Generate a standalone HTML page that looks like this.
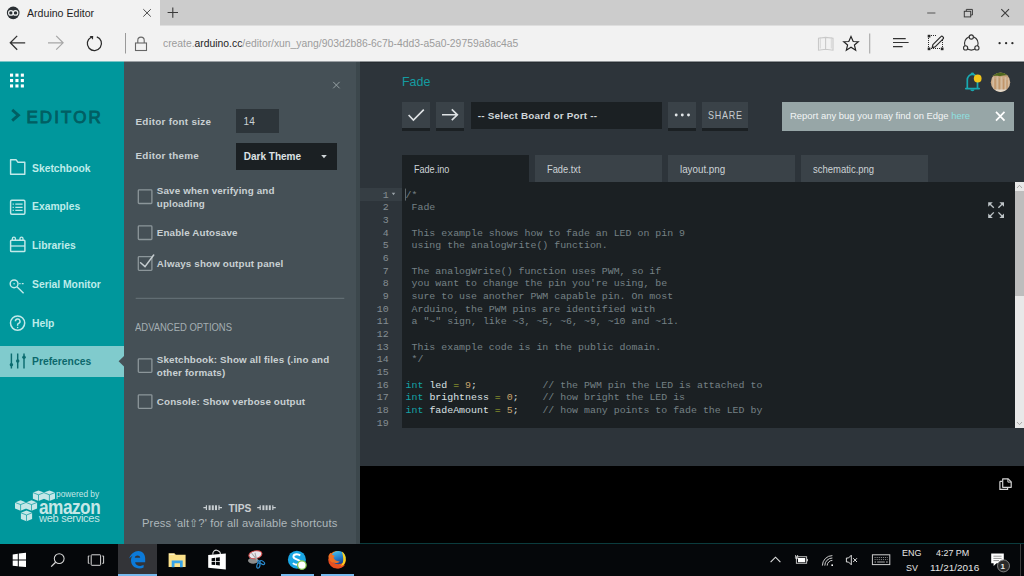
<!DOCTYPE html>
<html><head><meta charset="utf-8">
<style>
*{margin:0;padding:0;box-sizing:border-box}
html,body{width:1024px;height:576px;overflow:hidden;background:#f2f2f2;font-family:"Liberation Sans",sans-serif}
.a{position:absolute}
.t{position:absolute;white-space:nowrap;line-height:1}
svg{position:absolute;overflow:visible}
</style></head><body>
<!-- ===== Browser chrome ===== -->
<div class="a" style="left:0;top:0;width:1024px;height:25px;background:#cccccc"></div>
<div class="a" style="left:0;top:0;width:160px;height:26px;background:#f2f2f2"></div>
<div class="a" style="left:0;top:25px;width:1024px;height:36px;background:#f2f2f2"></div>
<div class="a" style="left:160px;top:25px;width:864px;height:1px;background:#dedede"></div>
<svg style="left:0;top:0" width="1024" height="61">
 <circle cx="13.2" cy="12.9" r="6.3" fill="#2b3034"/>
 <circle cx="10.9" cy="12.9" r="2.3" fill="none" stroke="#eef0f0" stroke-width="1.15"/><circle cx="15.5" cy="12.9" r="2.3" fill="none" stroke="#eef0f0" stroke-width="1.15"/>
 <path d="M143.3 9.2L150.8 16.6M150.8 9.2L143.3 16.6" stroke="#4a4a4a" stroke-width="1"/>
 <path d="M172.8 7.4V17.8M167.6 12.5H178" stroke="#3a3a3a" stroke-width="1.1"/>
 <path d="M927.2 13H935.4" stroke="#555" stroke-width="1"/>
 <rect x="964.3" y="11.3" width="6.4" height="5.6" fill="none" stroke="#3c3c3c" stroke-width="1"/>
 <path d="M966.3 11.3V9.4H972.4V15H970.7" fill="none" stroke="#3c3c3c" stroke-width="1"/>
 <path d="M1001.3 9.2L1009 16.9M1009 9.2L1001.3 16.9" stroke="#3c3c3c" stroke-width="1.1"/>
 <!-- back -->
 <path d="M10.4 42.8H25.2M17.2 35.9L10.3 42.8L17.2 49.7" fill="none" stroke="#333" stroke-width="1.3"/>
 <!-- forward -->
 <path d="M48 42.8H63M56.2 35.9L63.1 42.8L56.2 49.7" fill="none" stroke="#a6a6a6" stroke-width="1.2"/>
 <!-- refresh -->
 <path d="M96.8 36.8A7.1 7.1 0 1 1 91.1 37.2" fill="none" stroke="#2b2b2b" stroke-width="1.25"/>
 <path d="M93.2 35.9L89.6 36.1L93 39.7Z" fill="#2b2b2b"/>
 <path d="M125.5 33V53.5" stroke="#9a9a9a" stroke-width="1"/>
 <!-- lock -->
 <rect x="135.5" y="43" width="11" height="7.5" fill="none" stroke="#666" stroke-width="1.1"/>
 <path d="M137.8 43V40.3a3.2 3.2 0 0 1 6.4 0V43" fill="none" stroke="#666" stroke-width="1.1"/>
 <!-- book -->
 <path d="M818.5 38.2L825.6 37.4L833 38.2V50.2L825.6 49.3L818.5 50.2Z M825.6 37.4V49.3" fill="none" stroke="#c9c9c9" stroke-width="1.1"/>
 <path d="M820.3 37V48.5M831.3 37V48.5" fill="none" stroke="#d3d3d3" stroke-width="0.9"/>
 <!-- star -->
 <path d="M851 36.5L853.2 41.5L858.3 41.7L854.4 45L855.7 50.3L851 47.3L846.3 50.3L847.6 45L843.7 41.7L848.8 41.5Z" fill="none" stroke="#222" stroke-width="1.15" stroke-linejoin="miter"/>
 <path d="M869.7 33.4V53.4" stroke="#a8a8a8" stroke-width="1.1"/>
 <!-- hub -->
 <path d="M893 38.6H905.7M893 42.5H908.6M893 46.6H902.6" stroke="#333" stroke-width="1.1"/>
 <!-- web note -->
 <path d="M928.5 38V47M931 48.5H941M931 35.5H937M942.5 40V47" fill="none" stroke="#2a2a2a" stroke-width="1" stroke-dasharray="1 1"/>
 <rect x="927.7" y="34.8" width="2.7" height="2.7" fill="#2a2a2a"/><rect x="927.7" y="47.5" width="2.7" height="2.7" fill="#2a2a2a"/><rect x="940.8" y="47.5" width="2.7" height="2.7" fill="#2a2a2a"/>
 <path d="M932.9 44.6L940.9 36.6a1.2 1.2 0 0 1 1.8 0l0.4 0.4a1.2 1.2 0 0 1 0 1.8L935.1 46.8L932.2 47.6Z" fill="none" stroke="#2a2a2a" stroke-width="1.2" stroke-linejoin="round"/>
 <!-- share -->
 <circle cx="971.3" cy="43.3" r="6.8" fill="none" stroke="#333" stroke-width="1.1"/>
 <circle cx="971.3" cy="37" r="2.1" fill="#f2f2f2" stroke="#333" stroke-width="1.1"/>
 <circle cx="965.6" cy="47.9" r="2.1" fill="#f2f2f2" stroke="#333" stroke-width="1.1"/>
 <circle cx="976.9" cy="47.9" r="2.1" fill="#f2f2f2" stroke="#333" stroke-width="1.1"/>
 <!-- more -->
 <circle cx="999.6" cy="43.2" r="1.15" fill="#2a2a2a"/><circle cx="1006.1" cy="43.2" r="1.15" fill="#2a2a2a"/><circle cx="1012.4" cy="43.2" r="1.15" fill="#2a2a2a"/>
</svg>
<div class="t" style="left:27px;top:8.3px;font-size:11.4px;color:#1f1f1f;transform:scaleX(0.93);transform-origin:0 0">Arduino Editor</div>
<div class="t" style="left:163.3px;top:38.3px;font-size:11px;color:#9c9c9c;transform:scaleX(0.94);transform-origin:0 0">create.<span style="color:#1e1e1e">arduino.cc</span>/editor/xun_yang/903d2b86-6c7b-4dd3-a5a0-29759a8ac4a5</div>

<!-- ===== Sidebar ===== -->
<div class="a" style="left:0;top:61px;width:124px;height:483px;background:#00979c"></div>
<div class="a" style="left:0;top:346px;width:124px;height:31px;background:#80cbcd"></div>
<svg style="left:0;top:0" width="124" height="544">
 <rect x="10.0" y="73.6" width="3.1" height="3.1" fill="#fff"/>
 <rect x="10.0" y="79.0" width="3.1" height="3.1" fill="#fff"/>
 <rect x="10.0" y="84.4" width="3.1" height="3.1" fill="#fff"/>
 <rect x="15.4" y="73.6" width="3.1" height="3.1" fill="#fff"/>
 <rect x="15.4" y="79.0" width="3.1" height="3.1" fill="#fff"/>
 <rect x="15.4" y="84.4" width="3.1" height="3.1" fill="#fff"/>
 <rect x="20.8" y="73.6" width="3.1" height="3.1" fill="#fff"/>
 <rect x="20.8" y="79.0" width="3.1" height="3.1" fill="#fff"/>
 <rect x="20.8" y="84.4" width="3.1" height="3.1" fill="#fff"/>
 <path d="M12.2 109.8L18.4 115.2L12.2 120.6" fill="none" stroke="#005f63" stroke-width="2.9"/>
 <path d="M10.6 159.8H16.2L17.8 162.2H24.8V174.2H10.6Z" fill="none" stroke="#c3e9e9" stroke-width="1.45" stroke-linejoin="round"/>
 <rect x="10.6" y="200.3" width="14.3" height="14" rx="1.2" fill="none" stroke="#c3e9e9" stroke-width="1.45"/>
 <path d="M12.6 204.2H13.8M12.6 207.3H13.8M12.6 210.4H13.8M15.3 204.2H22.6M15.3 207.3H22.6M15.3 210.4H22.6" stroke="#c3e9e9" stroke-width="1.3"/>
 <rect x="10.6" y="240.2" width="14.3" height="11.3" rx="0.8" fill="none" stroke="#c3e9e9" stroke-width="1.45"/>
 <path d="M10.6 246H24.9" stroke="#c3e9e9" stroke-width="1.3"/>
 <path d="M12.4 240.2V238.6a1.5 1.5 0 0 1 3 0V240.2M20 240.2V238.6a1.5 1.5 0 0 1 3 0V240.2" fill="none" stroke="#c3e9e9" stroke-width="1.3"/>
 <circle cx="14.1" cy="283.8" r="3.9" fill="none" stroke="#c3e9e9" stroke-width="1.45"/>
 <circle cx="14.1" cy="283.8" r="0.8" fill="#c3e9e9"/>
 <path d="M17 286.8L23.6 293.2" stroke="#c3e9e9" stroke-width="1.45"/>
 <path d="M19.2 283.6H20.6M21.8 283.6H23.6" stroke="#c3e9e9" stroke-width="1.3"/>
 <circle cx="17.6" cy="323.1" r="7.1" fill="none" stroke="#c3e9e9" stroke-width="1.5"/>
 <path d="M15.4 321.3a2.3 2.3 0 1 1 3.2 2.1c-0.7 0.3 -1 0.8 -1 1.5V325.8" fill="none" stroke="#c3e9e9" stroke-width="1.45"/>
 <circle cx="17.6" cy="327.6" r="0.75" fill="#c3e9e9"/>
 <path d="M11.4 353.6V368.6M17.7 353.6V368.6M24 353.6V368.6" stroke="#0b6c70" stroke-width="1.45"/>
 <circle cx="11.4" cy="364.8" r="1.75" fill="#0b6c70"/><circle cx="17.7" cy="361.1" r="1.75" fill="#0b6c70"/><circle cx="24" cy="357.3" r="1.75" fill="#0b6c70"/>
 <path d="M124 356L118.6 361.3L124 366.6Z" fill="#465157"/>
 <path d="M32.9 492.59999999999997L38.5 490.4L44.099999999999994 492.59999999999997V498.79999999999995L38.5 501.0L32.9 498.79999999999995Z" fill="#c5e7e7"/>
 <path d="M38.5 494.79999999999995V501.0M32.9 492.59999999999997L38.5 494.79999999999995L44.099999999999994 492.59999999999997" fill="none" stroke="#00979c" stroke-width="0.7"/>
 <path d="M43.8 492.59999999999997L49.4 490.4L55.0 492.59999999999997V498.79999999999995L49.4 501.0L43.8 498.79999999999995Z" fill="#c5e7e7"/>
 <path d="M49.4 494.79999999999995V501.0M43.8 492.59999999999997L49.4 494.79999999999995L55.0 492.59999999999997" fill="none" stroke="#00979c" stroke-width="0.7"/>
 <path d="M15 502.4L20.6 500.2L26.2 502.4V508.59999999999997L20.6 510.8L15 508.59999999999997Z" fill="#c5e7e7"/>
 <path d="M20.6 504.59999999999997V510.8M15 502.4L20.6 504.59999999999997L26.2 502.4" fill="none" stroke="#00979c" stroke-width="0.7"/>
 <path d="M25.9 502.4L31.5 500.2L37.099999999999994 502.4V508.59999999999997L31.5 510.8L25.9 508.59999999999997Z" fill="#c5e7e7"/>
 <path d="M31.5 504.59999999999997V510.8M25.9 502.4L31.5 504.59999999999997L37.099999999999994 502.4" fill="none" stroke="#00979c" stroke-width="0.7"/>
 <path d="M20.9 512.8000000000001L26.5 510.6L32.099999999999994 512.8000000000001V519.0L26.5 521.2L20.9 519.0Z" fill="#c5e7e7"/>
 <path d="M26.5 515.0V521.2M20.9 512.8000000000001L26.5 515.0L32.099999999999994 512.8000000000001" fill="none" stroke="#00979c" stroke-width="0.7"/>
</svg>
<div class="t" style="left:26.4px;top:108.7px;font-size:17px;color:#005f63;letter-spacing:2.1px;-webkit-text-stroke:0.9px #005f63;">EDITOR</div>
<div class="t" style="left:31.8px;top:163.19px;font-size:10.6px;color:#bdecea;font-weight:bold;transform:scaleX(0.975);transform-origin:0 0;">Sketchbook</div>
<div class="t" style="left:31.8px;top:200.79px;font-size:10.6px;color:#bdecea;font-weight:bold;transform:scaleX(0.975);transform-origin:0 0;">Examples</div>
<div class="t" style="left:31.8px;top:239.99px;font-size:10.6px;color:#bdecea;font-weight:bold;transform:scaleX(0.975);transform-origin:0 0;">Libraries</div>
<div class="t" style="left:31.8px;top:278.79px;font-size:10.6px;color:#bdecea;font-weight:bold;transform:scaleX(0.975);transform-origin:0 0;">Serial Monitor</div>
<div class="t" style="left:31.8px;top:317.69px;font-size:10.6px;color:#bdecea;font-weight:bold;transform:scaleX(0.975);transform-origin:0 0;">Help</div>
<div class="t" style="left:31.8px;top:355.59px;font-size:10.6px;color:#0c686c;font-weight:bold;transform:scaleX(0.975);transform-origin:0 0;">Preferences</div>
<div class="t" style="left:56.3px;top:490.8px;font-size:8.2px;color:#c5e7e7;transform:scaleX(1.02);transform-origin:0 0;">powered by</div>
<div class="t" style="left:38.6px;top:495.5px;font-size:21px;color:#c5e7e7;font-weight:bold;letter-spacing:-0.6px;transform:scaleX(0.82);transform-origin:0 0;">amazon</div>
<div class="t" style="left:39.4px;top:512.8px;font-size:11.3px;color:#c5e7e7;letter-spacing:-0.3px;transform:scaleX(0.98);transform-origin:0 0;">web services</div>
<!-- ===== Prefs panel ===== -->
<div class="a" style="left:124px;top:61px;width:232px;height:483px;background:#455056"></div>
<div class="a" style="left:356px;top:61px;width:4px;height:483px;background:#3c474c"></div>
<div class="a" style="left:236px;top:109px;width:43px;height:24px;background:#2d353a"></div>
<div class="a" style="left:236px;top:143px;width:100.5px;height:27px;background:#1b2023"></div>
<svg style="left:0;top:0" width="360" height="544">
 <path d="M333.2 81.9L339.6 88.3M339.6 81.9L333.2 88.3" stroke="#9aa4a8" stroke-width="0.95"/>
 <path d="M321.2 155L326.8 155L324 158.2Z" fill="#d0d5d8"/>
 <rect x="138.3" y="189.9" width="13.6" height="13.6" rx="0.8" fill="none" stroke="#8c969a" stroke-width="1.3"/>
 <rect x="138.3" y="225.9" width="13.6" height="13.6" rx="0.8" fill="none" stroke="#8c969a" stroke-width="1.3"/>
 <rect x="138.3" y="256.7" width="13.6" height="13.6" rx="0.8" fill="none" stroke="#8c969a" stroke-width="1.3"/>
 <rect x="138.3" y="358.8" width="13.6" height="13.6" rx="0.8" fill="none" stroke="#8c969a" stroke-width="1.3"/>
 <rect x="138.3" y="394.8" width="13.6" height="13.6" rx="0.8" fill="none" stroke="#8c969a" stroke-width="1.3"/>
 <path d="M140.6 262.7L145 266.6L153.7 255" fill="none" stroke="#c6cdd0" stroke-width="1.5" stroke-linecap="round"/>
 <path d="M135.7 298.3H344.3" stroke="#68757b" stroke-width="1"/>
 <path d="M203.4 507.7H206.4M219.0 507.7H222.0" stroke="#c8ced1" stroke-width="1.2"/>
 <path d="M206.4 505.3V510.1M219.0 505.3V510.1" stroke="#c8ced1" stroke-width="1.2"/>
 <rect x="208.6" y="505.3" width="2" height="4.8" fill="#c8ced1"/><rect x="211.8" y="505.3" width="2" height="4.8" fill="#c8ced1"/><rect x="215.0" y="505.3" width="2" height="4.8" fill="#c8ced1"/>
 <path d="M257.2 507.7H260.2M272.8 507.7H275.8" stroke="#c8ced1" stroke-width="1.2"/>
 <path d="M260.2 505.3V510.1M272.8 505.3V510.1" stroke="#c8ced1" stroke-width="1.2"/>
 <rect x="262.4" y="505.3" width="2" height="4.8" fill="#c8ced1"/><rect x="265.59999999999997" y="505.3" width="2" height="4.8" fill="#c8ced1"/><rect x="268.8" y="505.3" width="2" height="4.8" fill="#c8ced1"/>
</svg>
<div class="t" style="left:135.5px;top:116.88px;font-size:9.9px;color:#c9d0d3;font-weight:bold;letter-spacing:0.27px;">Editor font size</div>
<div class="t" style="left:135.5px;top:150.79px;font-size:9.9px;color:#c9d0d3;font-weight:bold;letter-spacing:0.27px;">Editor theme</div>
<div class="t" style="left:243.6px;top:117.3px;font-size:10px;color:#c9d0d3;">14</div>
<div class="t" style="left:243.8px;top:151.5px;font-size:10px;color:#dde2e4;font-weight:bold;letter-spacing:0px;">Dark Theme</div>
<div class="t" style="left:156.8px;top:185.67px;font-size:9.8px;color:#c9d0d3;font-weight:bold;letter-spacing:0.15px;">Save when verifying and</div>
<div class="t" style="left:156.8px;top:198.97px;font-size:9.8px;color:#c9d0d3;font-weight:bold;letter-spacing:0.15px;">uploading</div>
<div class="t" style="left:156.8px;top:227.77px;font-size:9.8px;color:#c9d0d3;font-weight:bold;letter-spacing:0.15px;">Enable Autosave</div>
<div class="t" style="left:156.8px;top:258.77px;font-size:9.8px;color:#c9d0d3;font-weight:bold;letter-spacing:0.15px;">Always show output panel</div>
<div class="t" style="left:135.2px;top:321.7px;font-size:10.9px;color:#a4aeb2;transform:scaleX(0.868);transform-origin:0 0;">ADVANCED OPTIONS</div>
<div class="t" style="left:156.8px;top:354.57px;font-size:9.8px;color:#c9d0d3;font-weight:bold;letter-spacing:0.15px;">Sketchbook: Show all files (.ino and</div>
<div class="t" style="left:156.8px;top:367.87px;font-size:9.8px;color:#c9d0d3;font-weight:bold;letter-spacing:0.15px;">other formats)</div>
<div class="t" style="left:156.8px;top:397.17px;font-size:9.8px;color:#c9d0d3;font-weight:bold;letter-spacing:0.15px;">Console: Show verbose output</div>
<div class="t" style="left:228.6px;top:503.8px;font-size:10.2px;color:#c8ced1;font-weight:bold;letter-spacing:0px;">TIPS</div>
<div class="t" style="left:142px;top:518.2px;font-size:11.2px;color:#aeb7bb;letter-spacing:0.15px;">Press 'alt⇧?' for all available shortcuts</div>
<!-- ===== Editor ===== -->
<div class="a" style="left:360px;top:61px;width:664px;height:405px;background:#2d343a"></div>
<div class="a" style="left:360px;top:466px;width:664px;height:78px;background:#000"></div>
<div class="a" style="left:360px;top:543px;width:664px;height:1px;background:#0b3b3d"></div>
<div class="a" style="left:402px;top:102px;width:28px;height:26px;background:#3a4248"></div>
<div class="a" style="left:402px;top:128px;width:28px;height:3px;background:#1b2023"></div>
<div class="a" style="left:436px;top:102px;width:28px;height:26px;background:#3a4248"></div>
<div class="a" style="left:436px;top:128px;width:28px;height:3px;background:#1b2023"></div>
<div class="a" style="left:668px;top:102px;width:28px;height:26px;background:#3a4248"></div>
<div class="a" style="left:668px;top:128px;width:28px;height:3px;background:#1b2023"></div>
<div class="a" style="left:702px;top:102px;width:46px;height:26px;background:#3a4248"></div>
<div class="a" style="left:702px;top:128px;width:46px;height:3px;background:#1b2023"></div>
<div class="a" style="left:470.5px;top:102px;width:191.5px;height:27.3px;background:#1b2023"></div>
<div class="a" style="left:782px;top:102px;width:232px;height:28.5px;background:#97a6a7"></div>
<div class="a" style="left:402px;top:155px;width:127px;height:28px;background:#1b2023"></div>
<div class="a" style="left:535px;top:155px;width:127px;height:26.5px;background:#3a4248"></div>
<div class="a" style="left:668px;top:155px;width:127px;height:26.5px;background:#3a4248"></div>
<div class="a" style="left:801px;top:155px;width:127px;height:26.5px;background:#3a4248"></div>
<div class="a" style="left:402px;top:182px;width:613px;height:246px;background:#1b2023"></div>
<div class="a" style="left:360px;top:188px;width:42px;height:13px;background:#363e44"></div>
<div class="a" style="left:1015px;top:182px;width:9px;height:246px;background:#e8e8e8"></div>
<div class="a" style="left:1015px;top:191.3px;width:9px;height:105.2px;background:#bdbdbd"></div>
<svg style="left:0;top:0" width="1024" height="544">
 <path d="M408.6 115L413.4 120L423.8 109.6" fill="none" stroke="#dfe3e5" stroke-width="1.6"/>
 <path d="M442 114.8H457.5M451.8 109.4L457.4 114.8L451.8 120.2" fill="none" stroke="#dfe3e5" stroke-width="1.6"/>
 <circle cx="676.2" cy="115" r="1.45" fill="#e3e7e9"/>
 <circle cx="682.3" cy="115" r="1.45" fill="#e3e7e9"/>
 <circle cx="688.5" cy="115" r="1.45" fill="#e3e7e9"/>
 <path d="M996 111.8L1004.5 120.6M1004.5 111.8L996 120.6" stroke="#fff" stroke-width="1.7"/>
 <path d="M965.8 88.6H979.2M967.3 88.2V80a5.1 5.6 0 0 1 10.2 0V88.2" fill="none" stroke="#19a9b1" stroke-width="1.7" stroke-linejoin="round" stroke-linecap="round"/>
 <path d="M970.3 89.4a2.1 1.8 0 0 0 4.2 0Z" fill="#19a9b1"/>
 <ellipse cx="972.4" cy="73.6" rx="1.6" ry="1.2" fill="#19a9b1"/>
 <circle cx="977.7" cy="78.5" r="3.9" fill="#f0c419"/>
 <defs><clipPath id="av"><circle cx="1000.5" cy="82.2" r="9.7"/></clipPath></defs>
 <g clip-path="url(#av)"><rect x="990" y="72" width="21" height="21" fill="#c8a682"/><path d="M990 72H1011V75.5C1007 75 1003 75.6 1000 76.2C996 75.5 993 75.8 990 76.5Z" fill="#50691f"/><path d="M993.2 77V90M997.3 76.5V91M1001.5 77V91M1005.5 77V91M1008.6 78V90" stroke="#e3d6c4" stroke-width="1.6" opacity="0.45"/><path d="M995.2 79V90M999.4 78V91M1003.6 79V90M1007 80V89" stroke="#b9804a" stroke-width="1.1" opacity="0.4"/><rect x="990" y="89.5" width="21" height="4" fill="#e2d8ca"/></g>
 <path d="M988.2 202.2L992.8000000000001 202.2L988.2 206.79999999999998Z" fill="#bfc5c8"/>
 <path d="M990.2 204.2L993.8000000000001 207.79999999999998" stroke="#bfc5c8" stroke-width="1.3"/>
 <path d="M1004 202.2L999.4 202.2L1004 206.79999999999998Z" fill="#bfc5c8"/>
 <path d="M1002 204.2L998.4 207.79999999999998" stroke="#bfc5c8" stroke-width="1.3"/>
 <path d="M988.2 218L992.8000000000001 218L988.2 213.4Z" fill="#bfc5c8"/>
 <path d="M990.2 216L993.8000000000001 212.4" stroke="#bfc5c8" stroke-width="1.3"/>
 <path d="M1004 218L999.4 218L1004 213.4Z" fill="#bfc5c8"/>
 <path d="M1002 216L998.4 212.4" stroke="#bfc5c8" stroke-width="1.3"/>
 <path d="M1017 188L1019.5 185.3L1022 188" fill="none" stroke="#a0a0a0" stroke-width="0.9"/>
 <path d="M1017 422L1019.5 424.7L1022 422" fill="none" stroke="#a0a0a0" stroke-width="0.9"/>
 <path d="M391.7 192.7H395.3L393.5 195.3Z" fill="#9aa3a8"/>
 <path d="M999.9 481.3H1002.2M999.9 481.3V489.4H1007.6V487.6" fill="none" stroke="#d4d4d4" stroke-width="1.2"/>
 <path d="M1002.7 478.8H1008.2L1011.2 481.8V487.3H1002.7Z" fill="none" stroke="#d4d4d4" stroke-width="1.2" stroke-linejoin="round"/>
 <path d="M1007.9 478.8V482.1H1011.2" fill="none" stroke="#d4d4d4" stroke-width="1"/>
 <path d="M405.5 188.6V200.6" stroke="#7d868b" stroke-width="0.7"/>
</svg>
<div class="t" style="left:402.3px;top:74.95px;font-size:13px;color:#149ca1;transform:scaleX(0.955);transform-origin:0 0;">Fade</div>
<div class="t" style="left:477.8px;top:110.9px;font-size:9.9px;color:#d0d6d9;font-weight:bold;letter-spacing:0.2px;">-- Select Board or Port --</div>
<div class="t" style="left:708.4px;top:109.89px;font-size:10.6px;color:#c6ccd0;letter-spacing:0.9px;transform:scaleX(0.85);transform-origin:0 0;">SHARE</div>
<div class="t" style="left:789.5px;top:111.2px;font-size:9.7px;color:#f2f5f5;transform:scaleX(0.975);transform-origin:0 0;">Report any bug you may find on Edge <span style="color:#8ee0e0">here</span></div>
<div class="t" style="left:414px;top:164.8px;font-size:10.2px;color:#cdd3d6;transform:scaleX(0.89);transform-origin:0 0;">Fade.ino</div>
<div class="t" style="left:547.2px;top:164.8px;font-size:10.2px;color:#cdd3d6;transform:scaleX(0.91);transform-origin:0 0;">Fade.txt</div>
<div class="t" style="left:680px;top:164.8px;font-size:10.2px;color:#cdd3d6;transform:scaleX(0.96);transform-origin:0 0;">layout.png</div>
<div class="t" style="left:812.7px;top:164.8px;font-size:10.2px;color:#cdd3d6;transform:scaleX(0.93);transform-origin:0 0;">schematic.png</div>
<div class="a" style="left:405.6px;top:189.8px;font-family:'Liberation Mono',monospace;font-size:9.92px;line-height:12.65px;white-space:pre;color:#758085">/*
 Fade

 This example shows how to fade an LED on pin 9
 using the analogWrite() function.

 The analogWrite() function uses PWM, so if
 you want to change the pin you&#x27;re using, be
 sure to use another PWM capable pin. On most
 Arduino, the PWM pins are identified with
 a &quot;~&quot; sign, like ~3, ~5, ~6, ~9, ~10 and ~11.

 This example code is in the public domain.
 */

<span style="color:#14a3a6">int</span> <span style="color:#dce1e3">led</span> <span style="color:#a9b431">=</span> <span style="color:#c9a46b">9</span><span style="color:#dce1e3">;</span>           // the PWM pin the LED is attached to
<span style="color:#14a3a6">int</span> <span style="color:#dce1e3">brightness</span> <span style="color:#a9b431">=</span> <span style="color:#c9a46b">0</span><span style="color:#dce1e3">;</span>    // how bright the LED is
<span style="color:#14a3a6">int</span> <span style="color:#dce1e3">fadeAmount</span> <span style="color:#a9b431">=</span> <span style="color:#c9a46b">5</span><span style="color:#dce1e3">;</span>    // how many points to fade the LED by
</div>
<div class="a" style="left:360px;top:189.8px;width:28.6px;text-align:right;font-family:'Liberation Mono',monospace;font-size:9.92px;line-height:12.65px;white-space:pre;color:#858e93">1
2
3
4
5
6
7
8
9
10
11
12
13
14
15
16
17
18
19</div>
<div class="a" style="left:0;top:61px;width:124px;height:1px;background:#79c4c6"></div>
<div class="a" style="left:124px;top:61px;width:236px;height:1px;background:#9ba0a4"></div>
<div class="a" style="left:360px;top:61px;width:664px;height:1px;background:#8f9396"></div>
<div class="a" style="left:360px;top:62px;width:664px;height:1px;background:#262c31"></div>
<!-- ===== Taskbar ===== -->
<div class="a" style="left:0;top:544px;width:1024px;height:32px;background:#05070a"></div>
<div class="a" style="left:118px;top:544px;width:39px;height:32px;background:#333438"></div>
<div class="a" style="left:118px;top:574px;width:39px;height:2px;background:#76b9ed"></div>
<div class="a" style="left:281px;top:574px;width:33px;height:2px;background:#76b9ed"></div>
<div class="a" style="left:321px;top:574px;width:32.5px;height:2px;background:#76b9ed"></div>
<svg style="left:0;top:544px" width="1024" height="32">
 <path d="M12.7 10.50L17.8 9.80V15.60H12.7Z M18.8 9.60L26 8.80V15.60H18.8Z M12.7 16.40H17.8V22.30L12.7 21.70Z M18.8 16.40H26V23.00L18.8 22.40Z" fill="#fff"/>
 <circle cx="59.2" cy="14.60" r="4.9" fill="none" stroke="#d8d8d8" stroke-width="1.05"/>
 <path d="M55.6 18.20L51.2 22.60" stroke="#d8d8d8" stroke-width="1.3"/>
 <rect x="91.2" y="10.80" width="9.4" height="10.5" rx="0.6" fill="none" stroke="#d8d8d8" stroke-width="1"/>
 <path d="M89.5 12.00H88.3V19.30H89.5M102.3 12.00H103.6V19.30H102.3" fill="none" stroke="#d8d8d8" stroke-width="1"/>
 <path fill-rule="evenodd" d="M129.1 14.4C131 10 134.5 7.1 138.3 7.1C142.3 7.1 145.2 10.2 145.2 14.6L145.2 18.2L135.1 18.2C135.5 20.8 137.6 22 140.2 22C141.5 22 142.6 21.4 143.6 20.8L143.6 23.6C142.4 24.2 141 24.5 139.5 24.5C134.6 24.5 131 21.3 131 16.3C131 14.5 131.5 13 132.6 11.8C131.3 12.5 130.1 13.5 129.1 14.4Z M134.8 13.7L140.2 13.7C140.1 12.3 139 11.4 137.5 11.4C136.1 11.4 135 12.3 134.8 13.7Z" fill="#0c7ad8"/>
 <path d="M168.6 9.20H174.4L175.8 10.80H185.6V22.90H168.6Z" fill="#fbe08a"/>
 <path d="M169.2 10.30H174.2" stroke="#fff6d6" stroke-width="1"/>
 <path d="M171.7 23.30V16.40H182.7V23.30H180V19.20H174.5V23.30Z" fill="#36a3e8"/>
 <path d="M212.8 10.60C212.6 7.20 215.2 5.60 217.4 6.40C219.6 7.20 220.6 8.60 220.4 10.20" fill="none" stroke="#d8d8d8" stroke-width="1.1"/>
 <path d="M208.2 11.00L225.8 9.60V25.60L208.2 23.80Z" fill="#fff"/>
 <path d="M211.6 14.20L215.2 13.80V17.00H211.6Z M216 13.70L219.8 13.30V17.00H216Z M211.6 17.80H215.2V21.00L211.6 20.70Z M216 17.80H219.8V21.40L216 21.10Z" fill="#05070a"/>
 <ellipse cx="253.2" cy="16.60" rx="5.2" ry="3.1" fill="#8d8d8d"/>
 <ellipse cx="255.4" cy="10.70" rx="6.6" ry="3.9" transform="rotate(-12 255.4 10.70)" fill="#e9e9ef" stroke="#d34a4a" stroke-width="1"/>
 <path d="M251.5 9.00L257.6 16.50M255 8.80L256.8 16.50" stroke="#a8a8a8" stroke-width="1.1"/>
 <ellipse cx="258.4" cy="21.60" rx="1.5" ry="2.7" transform="rotate(15 258.4 21.60)" fill="none" stroke="#2a8bd0" stroke-width="1.2"/>
 <ellipse cx="262.2" cy="18.60" rx="2.7" ry="1.5" transform="rotate(35 262.2 18.60)" fill="none" stroke="#2a8bd0" stroke-width="1.2"/>
 <path d="M257.5 16.50L258.2 19.00M258.2 16.30L260.2 17.80" stroke="#2a8bd0" stroke-width="1.1"/>
 <!-- skype -->
 <circle cx="296.9" cy="15.70" r="9" fill="#1aa6e4"/>
 <path d="M300.2 11.50c-0.8 -0.9 -2.2 -1.3 -3.4 -1.3c-2 0 -3.4 1 -3.4 2.5c0 3 6.8 2.2 6.8 5.4c0 1.6 -1.5 2.6 -3.5 2.6c-1.5 0 -2.9 -0.5 -3.8 -1.5" fill="none" stroke="#fff" stroke-width="1.9"/>
 <circle cx="301.9" cy="21.10" r="4.3" fill="#fff" stroke="#7cc242" stroke-width="1.2"/>
 <defs><linearGradient id="ffb" x1="0.3" y1="0" x2="0.7" y2="1"><stop offset="0" stop-color="#45c0ee"/><stop offset="0.55" stop-color="#1f78c8"/><stop offset="1" stop-color="#1a3a8a"/></linearGradient><linearGradient id="ffo" x1="0.8" y1="0.1" x2="0.2" y2="0.9"><stop offset="0" stop-color="#fbb21f"/><stop offset="0.45" stop-color="#f26c22"/><stop offset="1" stop-color="#de3f1f"/></linearGradient></defs>
 <circle cx="337" cy="15.70" r="8.8" fill="url(#ffo)"/>
 <ellipse cx="338.3" cy="13.60" rx="7.4" ry="6.6" fill="url(#ffb)"/>
 <path d="M341.8 7.60C344.6 9.40 346.2 12.60 345.6 16.40C345 19.60 343 21.60 340.6 22.40C342.6 20.00 343.6 17.00 343.2 14.00C342.9 11.40 342.6 9.40 341.8 7.60Z" fill="#fbd21e"/>
 <path d="M328.4 12.20C329 10.40 330 9.20 330.6 8.80L332.2 10.80L334.8 12.00L333.5 13.80C334.6 16.20 337 17.60 339.8 17.40C338.4 19.00 335.4 19.60 332.6 18.60C330.4 17.60 328.8 15.20 328.4 12.20Z" fill="#f07022"/>
 <path d="M329 18.50C331 22.50 335 24.50 338.5 24.40C342 24.20 344 22.50 345 20.50C342 22.30 336 22.40 332.5 19.60Z" fill="#e8501f"/>
 <path d="M770.6 18.20L775.5 13.20L780.4 18.20" fill="none" stroke="#dedede" stroke-width="1.1"/>
 <rect x="796.4" y="12.70" width="10.2" height="6.6" fill="none" stroke="#bdbdbd" stroke-width="1"/>
 <rect x="798" y="14.00" width="7.2" height="4.2" fill="#fff"/>
 <rect x="806.8" y="14.90" width="1.2" height="2.4" fill="#bdbdbd"/>
 <path d="M795.6 11.00V13.40M797.6 11.00V13.40" stroke="#cfcfcf" stroke-width="0.9"/>
 <path d="M794.6 13.40H798.6L796.6 15.80Z" fill="#d8d8d8"/>
 <path d="M822.4 21.60a10 10 0 0 1 10 -10M824.8 21.60a7.6 7.6 0 0 1 7.6 -7.6M827.2 21.60a5.2 5.2 0 0 1 5.2 -5.2" fill="none" stroke="#cfcfcf" stroke-width="1"/>
 <rect x="831.4" y="20.40" width="1.6" height="1.6" fill="#fff"/>
 <path d="M846.4 14.00H848.5L851.3 11.20V20.80L848.5 18.00H846.4Z" fill="none" stroke="#dedede" stroke-width="1"/>
 <path d="M853.2 14.20L857 18.00M857 14.20L853.2 18.00" stroke="#dedede" stroke-width="1"/>
 <rect x="872.4" y="10.80" width="17.4" height="9.8" fill="none" stroke="#d0d0d0" stroke-width="1"/>
 <path d="M874.5 13.50H887.8M874.5 15.60H887.8" stroke="#909090" stroke-width="0.9" stroke-dasharray="1.2 0.9"/>
 <path d="M874.5 18.00H876M877.2 18.00H884.8M886 18.00H887.8" stroke="#c0c0c0" stroke-width="0.9"/>
 <path d="M991.2 9.50H1003.8V19.20H996.5L993.6 22.00V19.20H991.2Z" fill="#fff"/>
 <path d="M993.4 12.20H1001.6M993.4 14.40H1001.6M993.4 16.60H999" stroke="#7a7a7a" stroke-width="0.8"/>
 <circle cx="1003.5" cy="21.90" r="6" fill="#2a2a2a" stroke="#8a8a8a" stroke-width="0.9"/>
 <path d="M1020.5 0V32" stroke="#3d3d3d" stroke-width="1"/>
</svg>
<div class="t" style="left:902.3px;top:548px;font-size:9.6px;color:#e6e6e6;transform:scaleX(0.93);transform-origin:0 0;">ENG</div>
<div class="t" style="left:905.5px;top:563.14px;font-size:9.6px;color:#e6e6e6;transform:scaleX(0.93);transform-origin:0 0;">SV</div>
<div class="t" style="left:935.7px;top:548px;font-size:9.6px;color:#e6e6e6;transform:scaleX(0.93);transform-origin:0 0;">4:27 PM</div>
<div class="t" style="left:929.6px;top:563.14px;font-size:9.6px;color:#e6e6e6;transform:scaleX(1.04);transform-origin:0 0;">11/21/2016</div>
<div class="t" style="left:1000.6px;top:562.70px;font-size:8px;color:#f0f0f0;font-weight:bold;">1</div>
</body></html>
